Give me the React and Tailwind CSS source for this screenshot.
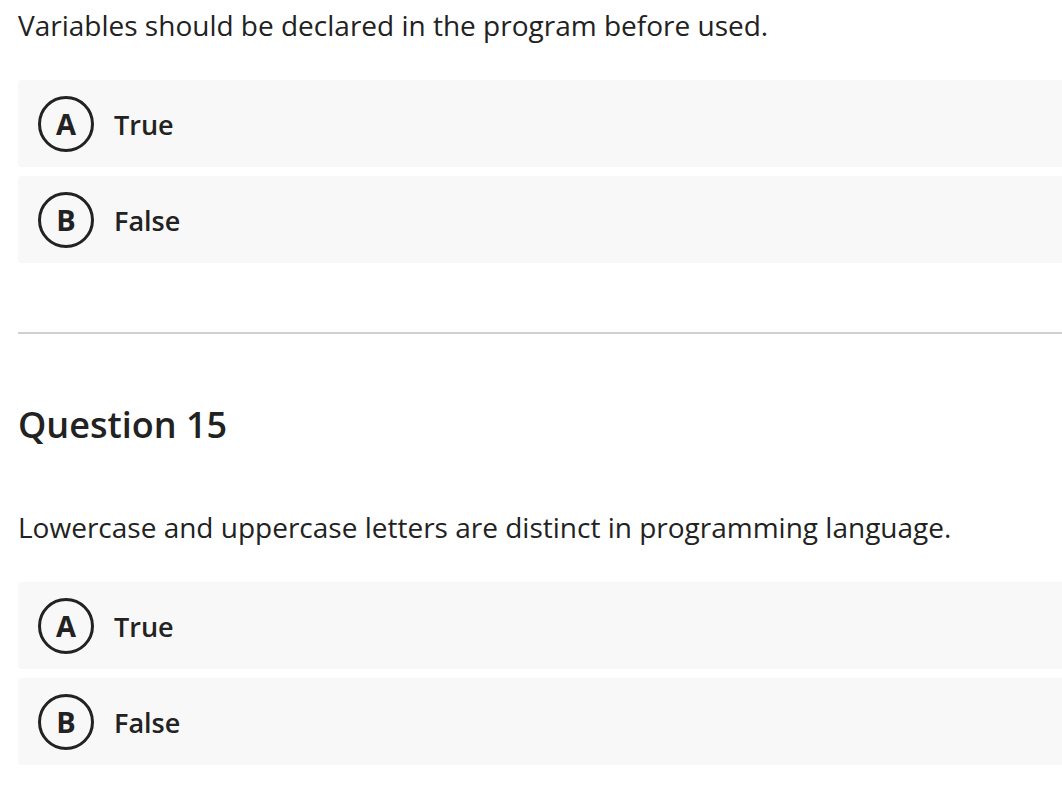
const questions = [
  {
    id: 14,
    showTitle: false,
    text: "Variables should be declared in the program before used.",
    options: ["True", "False"],
  },
  {
    id: 15,
    showTitle: true,
    text: "Lowercase and uppercase letters are distinct in programming language.",
    options: ["True", "False"],
  },
];

const LETTERS = ["A", "B", "C", "D"];

function Option({ letter, label }) {
  return (
    <div className="flex items-center h-[87px] rounded-[4px] bg-[#f8f8f8] pl-[20px]">
      <div className="flex items-center justify-center w-[56px] h-[56px] rounded-full border-[3px] border-[#222] text-[29px] font-bold leading-none text-[#222]">
        {letter}
      </div>
      <span className="ml-[20px] mt-[3px] text-[27px] font-semibold text-[#222]">{label}</span>
    </div>
  );
}

export default function App() {
  return (
    <div
      className="min-h-screen bg-white pl-[18px] overflow-hidden"
      style={{ fontFamily: '"Open Sans", sans-serif' }}
    >
      {questions.map((q, i) => (
        <div key={q.id}>
          {q.showTitle && (
            <h2 className="mt-[68px] text-[36px] font-semibold leading-[46px] text-[#222]">
              Question {q.id}
            </h2>
          )}
          <p
            className={
              (q.showTitle ? "mt-[58px]" : "pt-[4px]") +
              " text-[28px] leading-[42px] text-[#222]"
            }
          >
            {q.text}
          </p>
          <div className="mt-[34px] flex flex-col gap-[9px] w-[1100px]">
            {q.options.map((opt, j) => (
              <Option key={opt} letter={LETTERS[j]} label={opt} />
            ))}
          </div>
          {i < questions.length - 1 && (
            <div className="mt-[69px] h-[2px] w-[1100px] bg-[#d0d0d0]" />
          )}
        </div>
      ))}
    </div>
  );
}
